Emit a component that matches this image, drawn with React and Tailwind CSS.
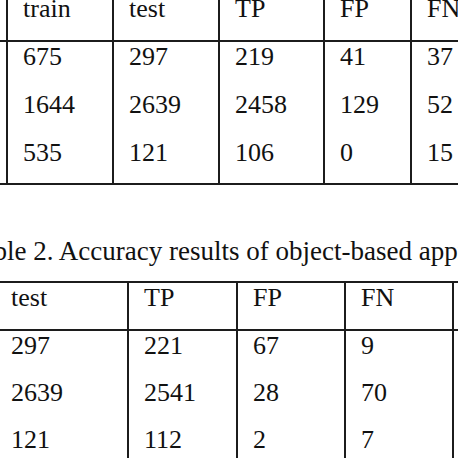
import React from "react";

const topCols = [
  { w: "w-[102px]", head: "", vals: ["", "", ""] },
  { w: "w-[106px]", head: "train", vals: ["675", "1644", "535"] },
  { w: "w-[106px]", head: "test", vals: ["297", "2639", "121"] },
  { w: "w-[105px]", head: "TP", vals: ["219", "2458", "106"] },
  { w: "w-[87px]", head: "FP", vals: ["41", "129", "0"] },
  { w: "w-[102px]", head: "FN", vals: ["37", "52", "15"] },
];
const topRowH = ["h-[48px]", "h-[48px]", "h-[45px]"];

const botCols = [
  { w: "w-[102px]", head: "train", vals: ["675", "1644", "535"] },
  { w: "w-[133px]", head: "test", vals: ["297", "2639", "121"] },
  { w: "w-[109px]", head: "TP", vals: ["221", "2541", "112"] },
  { w: "w-[108px]", head: "FP", vals: ["67", "28", "2"] },
  { w: "w-[108px]", head: "FN", vals: ["9", "70", "7"] },
  { w: "w-[102px]", head: "", vals: ["", "", ""] },
];
const botRowH = ["h-[47px]", "h-[47px]", "h-[47px]"];

function Table({ cols, rowH, className }) {
  return (
    <table className={"block w-max border-l-2 border-t-2 border-b-2 border-[#1c1c1c] " + className}>
      <thead className="block">
        <tr className="flex border-b-2 border-[#1c1c1c]">
          {cols.map((c, i) => (
            <th
              key={i}
              className={c.w + " h-[46px] shrink-0 border-r-2 border-[#1c1c1c] pl-[15px] text-left font-normal leading-[30px]"}
            >
              {c.head}
            </th>
          ))}
        </tr>
      </thead>
      <tbody className="block">
        {rowH.map((h, r) => (
          <tr key={r} className="flex">
            {cols.map((c, i) => (
              <td
                key={i}
                className={c.w + " " + h + " shrink-0 border-r-2 border-[#1c1c1c] pl-[15px] align-top leading-[30px]"}
              >
                {c.vals[r]}
              </td>
            ))}
          </tr>
        ))}
      </tbody>
    </table>
  );
}

export default function App() {
  return (
    <div className="w-[458px] h-[458px] overflow-hidden bg-white text-[#111] font-['Liberation_Serif','Times_New_Roman',serif] text-[26px]">
      <div className="flex flex-col">
        <Table cols={topCols} rowH={topRowH} className="-mt-[8px] -ml-[96px]" />
        <p className="mt-[51px] -ml-[33px] h-[30px] whitespace-nowrap text-[27px] leading-[30px]">
          Table 2. Accuracy results of object-based approach
        </p>
        <Table cols={botCols} rowH={botRowH} className="mt-[15px] -ml-[108px]" />
      </div>
    </div>
  );
}
